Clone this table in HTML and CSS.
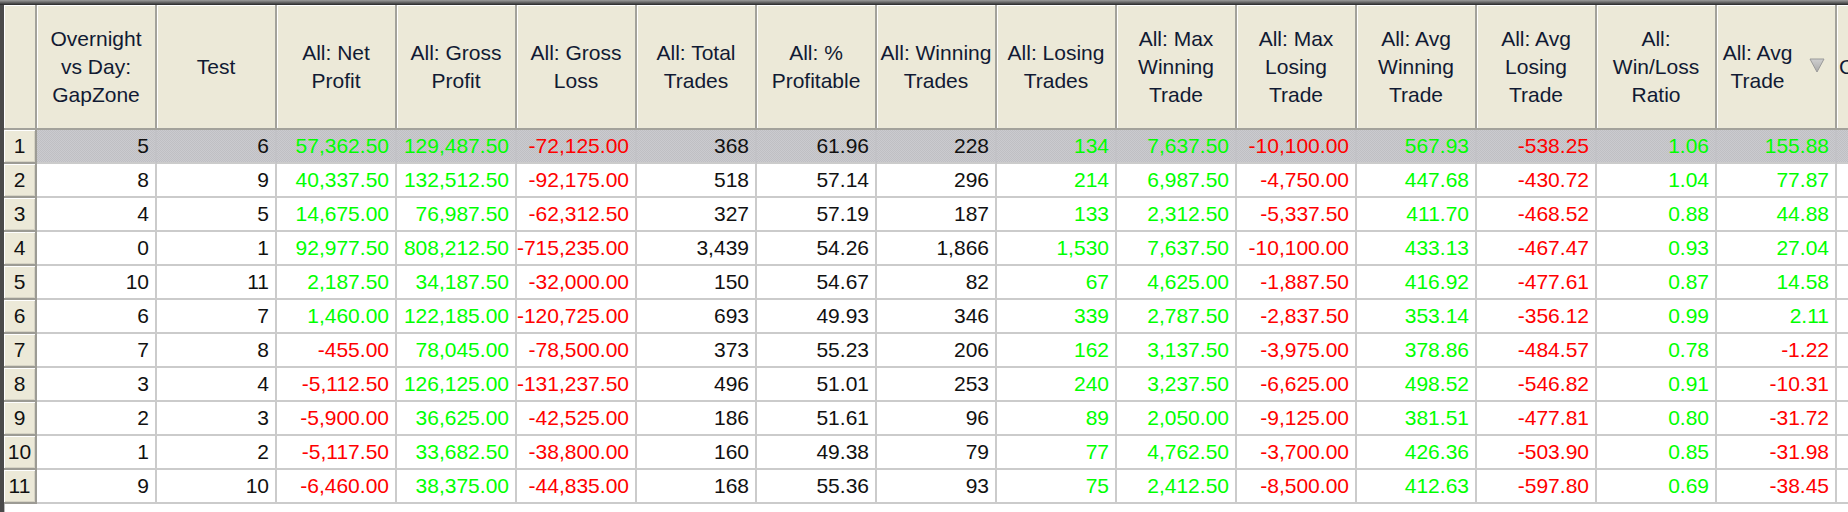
FILE: index.html
```html
<!DOCTYPE html>
<html>
<head>
<meta charset="utf-8">
<title>Optimization Report</title>
<link rel="stylesheet" href="styles.css">
</head>
<body>
<div class="window">
  <div class="topband"></div>
  <div class="viewport">
    <div class="grid">
      <div class="row">
        <div class="hc corner"></div>
        <div class="hc"><span>Overnight vs Day: GapZone</span></div>
        <div class="hc"><span>Test</span></div>
        <div class="hc"><span>All: Net Profit</span></div>
        <div class="hc"><span>All: Gross Profit</span></div>
        <div class="hc"><span>All: Gross Loss</span></div>
        <div class="hc"><span>All: Total Trades</span></div>
        <div class="hc"><span>All: % Profitable</span></div>
        <div class="hc"><span>All: Winning Trades</span></div>
        <div class="hc"><span>All: Losing Trades</span></div>
        <div class="hc"><span>All: Max Winning Trade</span></div>
        <div class="hc"><span>All: Max Losing Trade</span></div>
        <div class="hc"><span>All: Avg Winning Trade</span></div>
        <div class="hc"><span>All: Avg Losing Trade</span></div>
        <div class="hc"><span>All: Win/Loss Ratio</span></div>
        <div class="hc sorted"><span>All: Avg Trade</span>
          <svg class="sort-arrow" width="16" height="16" viewBox="0 0 16 16">
            <defs>
              <linearGradient id="ag" x1="0" y1="0" x2="0" y2="1">
                <stop offset="0" stop-color="#cfcfcf"/>
                <stop offset="1" stop-color="#a9a9a9"/>
              </linearGradient>
            </defs>
            <polygon points="1,2 15,2 8,15" fill="url(#ag)" stroke="#9a9a9a" stroke-width="1"/>
          </svg>
        </div>
        <div class="hc partial"><span>C</span></div>
      </div>

      <div class="row sel">
        <div class="rh">1</div>
        <div class="c">5</div><div class="c">6</div>
        <div class="c g">57,362.50</div><div class="c g">129,487.50</div><div class="c r">-72,125.00</div>
        <div class="c">368</div><div class="c">61.96</div><div class="c">228</div><div class="c g">134</div>
        <div class="c g">7,637.50</div><div class="c r">-10,100.00</div><div class="c g">567.93</div><div class="c r">-538.25</div>
        <div class="c g">1.06</div><div class="c g">155.88</div><div class="c"></div>
      </div>
      <div class="row">
        <div class="rh">2</div>
        <div class="c">8</div><div class="c">9</div>
        <div class="c g">40,337.50</div><div class="c g">132,512.50</div><div class="c r">-92,175.00</div>
        <div class="c">518</div><div class="c">57.14</div><div class="c">296</div><div class="c g">214</div>
        <div class="c g">6,987.50</div><div class="c r">-4,750.00</div><div class="c g">447.68</div><div class="c r">-430.72</div>
        <div class="c g">1.04</div><div class="c g">77.87</div><div class="c"></div>
      </div>
      <div class="row">
        <div class="rh">3</div>
        <div class="c">4</div><div class="c">5</div>
        <div class="c g">14,675.00</div><div class="c g">76,987.50</div><div class="c r">-62,312.50</div>
        <div class="c">327</div><div class="c">57.19</div><div class="c">187</div><div class="c g">133</div>
        <div class="c g">2,312.50</div><div class="c r">-5,337.50</div><div class="c g">411.70</div><div class="c r">-468.52</div>
        <div class="c g">0.88</div><div class="c g">44.88</div><div class="c"></div>
      </div>
      <div class="row">
        <div class="rh">4</div>
        <div class="c">0</div><div class="c">1</div>
        <div class="c g">92,977.50</div><div class="c g">808,212.50</div><div class="c r">-715,235.00</div>
        <div class="c">3,439</div><div class="c">54.26</div><div class="c">1,866</div><div class="c g">1,530</div>
        <div class="c g">7,637.50</div><div class="c r">-10,100.00</div><div class="c g">433.13</div><div class="c r">-467.47</div>
        <div class="c g">0.93</div><div class="c g">27.04</div><div class="c"></div>
      </div>
      <div class="row">
        <div class="rh">5</div>
        <div class="c">10</div><div class="c">11</div>
        <div class="c g">2,187.50</div><div class="c g">34,187.50</div><div class="c r">-32,000.00</div>
        <div class="c">150</div><div class="c">54.67</div><div class="c">82</div><div class="c g">67</div>
        <div class="c g">4,625.00</div><div class="c r">-1,887.50</div><div class="c g">416.92</div><div class="c r">-477.61</div>
        <div class="c g">0.87</div><div class="c g">14.58</div><div class="c"></div>
      </div>
      <div class="row">
        <div class="rh">6</div>
        <div class="c">6</div><div class="c">7</div>
        <div class="c g">1,460.00</div><div class="c g">122,185.00</div><div class="c r">-120,725.00</div>
        <div class="c">693</div><div class="c">49.93</div><div class="c">346</div><div class="c g">339</div>
        <div class="c g">2,787.50</div><div class="c r">-2,837.50</div><div class="c g">353.14</div><div class="c r">-356.12</div>
        <div class="c g">0.99</div><div class="c g">2.11</div><div class="c"></div>
      </div>
      <div class="row">
        <div class="rh">7</div>
        <div class="c">7</div><div class="c">8</div>
        <div class="c r">-455.00</div><div class="c g">78,045.00</div><div class="c r">-78,500.00</div>
        <div class="c">373</div><div class="c">55.23</div><div class="c">206</div><div class="c g">162</div>
        <div class="c g">3,137.50</div><div class="c r">-3,975.00</div><div class="c g">378.86</div><div class="c r">-484.57</div>
        <div class="c g">0.78</div><div class="c r">-1.22</div><div class="c"></div>
      </div>
      <div class="row">
        <div class="rh">8</div>
        <div class="c">3</div><div class="c">4</div>
        <div class="c r">-5,112.50</div><div class="c g">126,125.00</div><div class="c r">-131,237.50</div>
        <div class="c">496</div><div class="c">51.01</div><div class="c">253</div><div class="c g">240</div>
        <div class="c g">3,237.50</div><div class="c r">-6,625.00</div><div class="c g">498.52</div><div class="c r">-546.82</div>
        <div class="c g">0.91</div><div class="c r">-10.31</div><div class="c"></div>
      </div>
      <div class="row">
        <div class="rh">9</div>
        <div class="c">2</div><div class="c">3</div>
        <div class="c r">-5,900.00</div><div class="c g">36,625.00</div><div class="c r">-42,525.00</div>
        <div class="c">186</div><div class="c">51.61</div><div class="c">96</div><div class="c g">89</div>
        <div class="c g">2,050.00</div><div class="c r">-9,125.00</div><div class="c g">381.51</div><div class="c r">-477.81</div>
        <div class="c g">0.80</div><div class="c r">-31.72</div><div class="c"></div>
      </div>
      <div class="row">
        <div class="rh">10</div>
        <div class="c">1</div><div class="c">2</div>
        <div class="c r">-5,117.50</div><div class="c g">33,682.50</div><div class="c r">-38,800.00</div>
        <div class="c">160</div><div class="c">49.38</div><div class="c">79</div><div class="c g">77</div>
        <div class="c g">4,762.50</div><div class="c r">-3,700.00</div><div class="c g">426.36</div><div class="c r">-503.90</div>
        <div class="c g">0.85</div><div class="c r">-31.98</div><div class="c"></div>
      </div>
      <div class="row">
        <div class="rh">11</div>
        <div class="c">9</div><div class="c">10</div>
        <div class="c r">-6,460.00</div><div class="c g">38,375.00</div><div class="c r">-44,835.00</div>
        <div class="c">168</div><div class="c">55.36</div><div class="c">93</div><div class="c g">75</div>
        <div class="c g">2,412.50</div><div class="c r">-8,500.00</div><div class="c g">412.63</div><div class="c r">-597.80</div>
        <div class="c g">0.69</div><div class="c r">-38.45</div><div class="c"></div>
      </div>
    </div>
  </div>
</div>
</body>
</html>
```

FILE: styles.css
```css
html, body {
  margin: 0;
  padding: 0;
  background: #ffffff;
  overflow: hidden;
}

.window {
  width: 1848px;
  height: 512px;
  display: flex;
  flex-direction: column;
  background: #ffffff;
  font-family: "Liberation Sans", Arial, sans-serif;
  font-size: 21px;
  overflow: hidden;
}

.topband {
  height: 5px;
  flex: none;
  background: linear-gradient(#9c9c9c 0%, #6a6a6a 45%, #262626 100%);
}

.viewport {
  flex: 1;
  border-left: 4px solid #4a4a4a;
  box-shadow: inset 1px 0 0 #b8b8b8;
  overflow: hidden;
}

.grid {
  display: grid;
  grid-template-columns: 33px repeat(16, 120px);
  grid-template-rows: 125px repeat(11, 34px);
  width: max-content;
}

.row {
  display: contents;
}

/* header cells */
.hc {
  position: relative;
  box-sizing: border-box;
  background: #ece9d8;
  border-right: 2px solid #a3a29b;
  border-bottom: 2px solid #a3a29b;
  box-shadow: inset 1px 1px 0 #ffffff;
  display: flex;
  align-items: center;
  justify-content: center;
  text-align: center;
  padding: 0 2px;
  line-height: 28px;
  color: #111a33;
  overflow: hidden;
}

.hc.sorted {
  padding-right: 39px;
}

.sort-arrow {
  position: absolute;
  left: 92px;
  top: 52px;
}

.hc.partial {
  justify-content: flex-start;
  padding-left: 2px;
  border-right: none;
}

/* row header buttons */
.rh {
  box-sizing: border-box;
  background: #ece9d8;
  border-right: 2px solid #9c9b94;
  border-bottom: 2px solid #9c9b94;
  box-shadow: inset 1px 1px 0 #ffffff, inset -1px -1px 0 #d6d3c4;
  display: flex;
  align-items: center;
  justify-content: center;
  color: #111111;
}

/* data cells */
.c {
  box-sizing: border-box;
  border-right: 2px solid #cbcbcb;
  border-bottom: 2px solid #cbcbcb;
  display: flex;
  align-items: center;
  justify-content: flex-end;
  padding-right: 6px;
  white-space: nowrap;
  overflow: hidden;
  color: #111111;
}

.sel .c {
  background-color: #c7c7cb;
  background-image: repeating-conic-gradient(#bfbfc3 0 25%, #cbcbcf 0 50%);
  background-size: 2px 2px;
  border-right-color: #c2c2c6;
}

.c.g {
  color: #00ff00;
}

.c.r {
  color: #ff0000;
}
```
